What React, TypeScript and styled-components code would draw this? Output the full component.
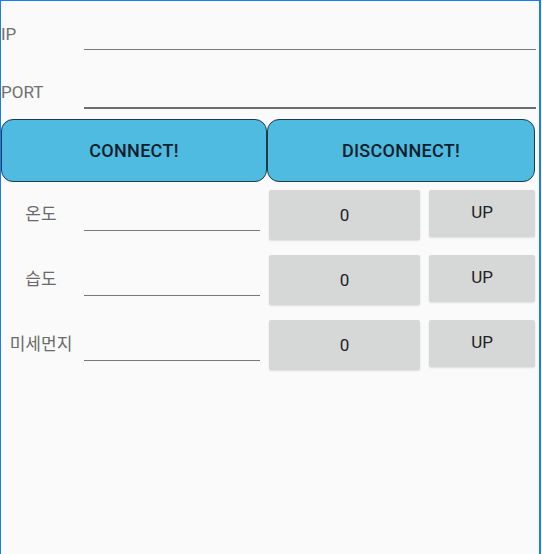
import React from "react";
import styled, { createGlobalStyle } from "styled-components";

const GlobalStyle = createGlobalStyle`
    html, body {
        margin: 0;
        padding: 0;
        background: #fafafa;
    }
    * {
        box-sizing: border-box;
    }
`;

const sensors = ["온도", "습도", "미세먼지"];

export default function App() {
    return (
        <>
            <GlobalStyle />
            <Frame>
                <Field>
                    <FieldLabel>IP</FieldLabel>
                    <Input />
                </Field>
                <Field>
                    <FieldLabel>PORT</FieldLabel>
                    <Input focused />
                </Field>
                <ConnectRow>
                    <ConnectButton>CONNECT!</ConnectButton>
                    <ConnectButton>DISCONNECT!</ConnectButton>
                </ConnectRow>
                <SensorList>
                    {sensors.map((name) => (
                        <SensorRow key={name}>
                            <SensorLabel>{name}</SensorLabel>
                            <SensorInput />
                            <ValueButton>0</ValueButton>
                            <UpButton>UP</UpButton>
                        </SensorRow>
                    ))}
                </SensorList>
            </Frame>
        </>
    );
}

const Frame = styled.div`
    width: 541px;
    height: 554px;
    border-style: solid;
    border-color: #1a7cf5;
    border-width: 1px 2px 0 1px;
    background: #fafafa;
    font-family: Roboto, "Noto Sans CJK KR", sans-serif;
    display: flex;
    flex-direction: column;
`;

const Field = styled.div`
    display: flex;
    align-items: flex-end;
    height: 58px;
    padding-right: 3px;
`;

const FieldLabel = styled.div`
    width: 83px;
    margin-bottom: 15px;
    font-size: 17px;
    line-height: 20px;
    color: #707070;
`;

const Input = styled.div<{ focused?: boolean }>`
    flex: 1;
    height: 30px;
    margin-bottom: ${(p) => (p.focused ? "8px" : "9px")};
    border-bottom: ${(p) => (p.focused ? "2px solid #6e6e6e" : "1px solid #7a7a7a")};
`;

const ConnectRow = styled.div`
    display: grid;
    grid-template-columns: 266px 268px;
    margin-top: 2px;
    height: 63px;
`;

const ConnectButton = styled.div`
    display: flex;
    align-items: center;
    justify-content: center;
    background: #50bbe0;
    border: 1px solid #1d3b4a;
    border-radius: 12px;
    color: #0c1e2b;
    font-size: 18px;
    font-weight: 500;
    letter-spacing: 0.3px;
`;

const SensorList = styled.div`
    display: flex;
    flex-direction: column;
    gap: 15px;
    margin-top: 8px;
`;

const SensorRow = styled.div`
    display: flex;
    align-items: flex-start;
    height: 50px;
`;

const SensorLabel = styled.div`
    width: 83px;
    padding-right: 3px;
    align-self: center;
    margin-bottom: 5px;
    text-align: center;
    font-size: 17px;
    color: #6a6a6a;
`;

const SensorInput = styled.div`
    width: 176px;
    height: 30px;
    align-self: flex-end;
    margin-bottom: 9px;
    border-bottom: 1px solid #7a7a7a;
`;

const ValueButton = styled.div`
    display: flex;
    align-items: center;
    justify-content: center;
    width: 151px;
    height: 50px;
    margin-left: 9px;
    background: #d6d7d7;
    border-radius: 2px;
    box-shadow: 0 1px 2px rgba(0, 0, 0, 0.12);
    color: #222;
    font-size: 17px;
`;

const UpButton = styled(ValueButton)`
    width: 106px;
    height: 47px;
    padding-bottom: 4px;
`;
